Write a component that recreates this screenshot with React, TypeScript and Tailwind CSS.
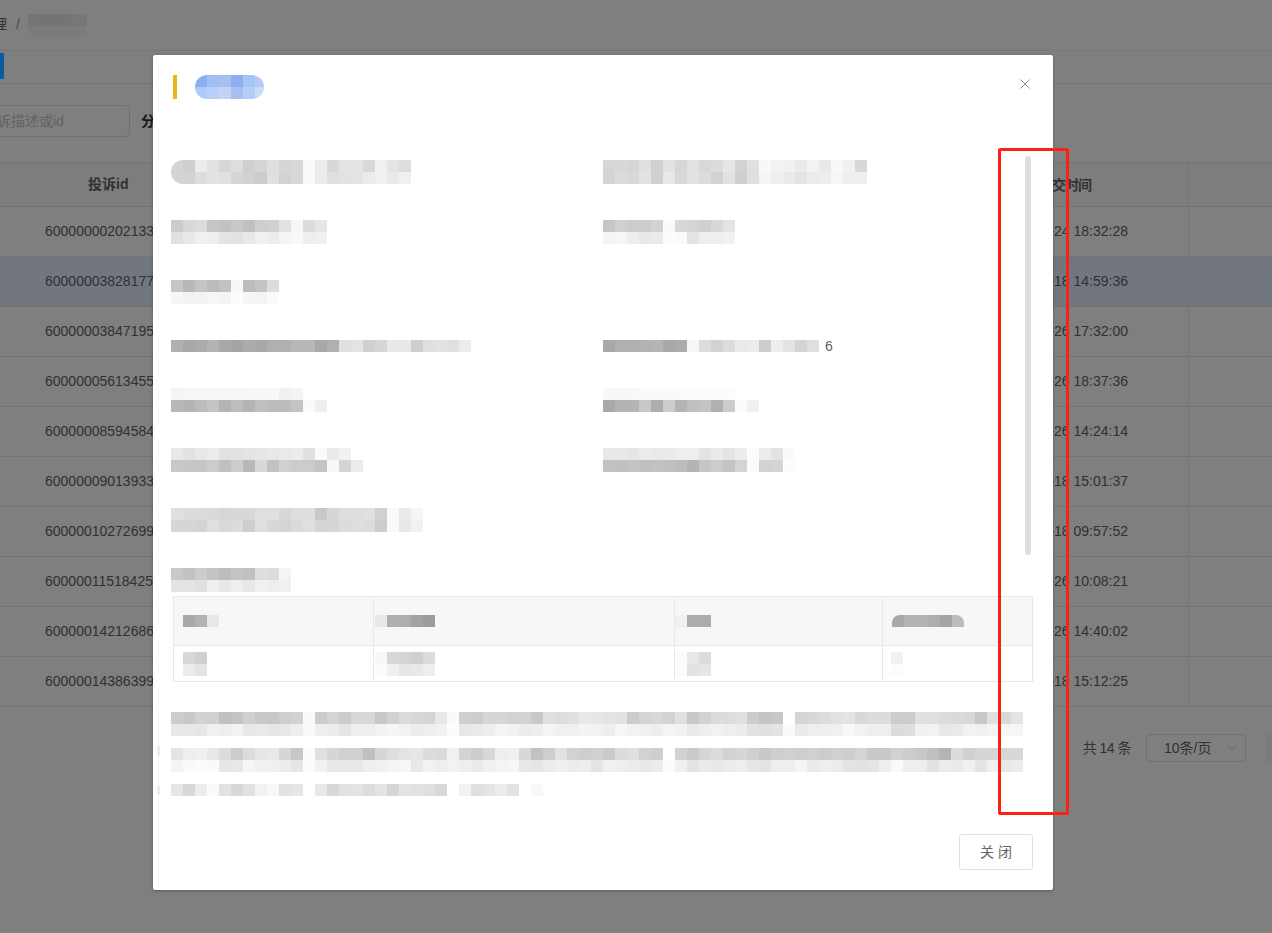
const rows = [
  ['60000000202133', '2023-04-24 18:32:28'],
  ['60000003828177', '2023-04-18 14:59:36'],
  ['60000003847195', '2023-04-26 17:32:00'],
  ['60000005613455', '2023-04-26 18:37:36'],
  ['60000008594584', '2023-04-26 14:24:14'],
  ['60000009013933', '2023-04-18 15:01:37'],
  ['60000010272699', '2023-04-18 09:57:52'],
  ['60000011518425', '2023-04-26 10:08:21'],
  ['60000014212686', '2023-04-26 14:40:02'],
  ['60000014386399', '2023-04-18 15:12:25'],
]

// two hex digits = a grey, six = a full colour
const shade = (t: string) => (t.length === 2 ? `#${t}${t}${t}` : `#${t}`)

function Mosaic({ lines, className = '' }: { lines: string[]; className?: string }) {
  return (
    <div className={`flex w-fit flex-col ${className}`}>
      {lines.map((line, i) => (
        <div key={i} className="flex">
          {line.split(' ').map((t, j) => (
            <div key={j} className="h-3 w-3" style={{ backgroundColor: shade(t) }} />
          ))}
        </div>
      ))}
    </div>
  )
}

const grid = [
  [
    ['d4 cf ec e2 d6 dd cf d5 de d6 d8 fa ec d8 e4 e4 d8 f0 e4 dd', 'd4 d2 dd e2 e0 d6 d2 cc e0 d2 d8 fa ec e0 e2 e4 ec f0 ea f0'],
    ['d6 d8 d6 e0 d0 e2 d6 e2 d8 dc e6 d2 e0 f8 f2 f0 ea f2 e8 f8 f0 d8', 'd4 dc d8 e2 d0 e8 d8 e2 dc d2 e2 cf e0 f4 ee ea e4 ec ee f6 ee ee'],
  ],
  [
    ['cc d8 dc c6 c2 c8 c0 ce d0 e2 f6 dc e6', 'e0 e8 f0 ee e4 e2 e8 f0 ec f4 f8 ee f0'],
    ['c6 d0 cc cc d2 fa d8 d4 d0 d8 e4', 'f4 f6 ee e8 ea fc fa e4 ee ee f2'],
  ],
  [['c6 b8 c4 bc c2 f8 bc c4 dc', 'f6 f2 f2 f6 f4 fc f6 f4 fa'], []],
  [
    ['b0 a8 ac b4 a8 a4 ac a8 b0 b0 b8 b8 a8 b0 e0 e4 d0 d6 e8 e8 ce e0 e2 e0 ec'],
    ['a8 b0 b0 b2 b4 a8 ac f6 dc d2 dc ea ec cc ee e4 d4 e0'],
  ],
]

const raised = [
  [
    ['f4 f6 f6 f6 f6 f6 f6 f8 f8 f0 f4 ff ff', 'b8 b4 bc c4 b4 be b4 c0 bc bc c4 fa ee'],
    ['f8 f8 f8 fa fa fa fa fc fc fc fc ff ff', 'a8 b4 b4 c8 ae cc b4 c0 c4 b0 cc fc f0'],
  ],
  [
    ['e8 e2 e8 ec e2 e2 e4 e6 e8 ea ec e0 fa ea f2 ff', 'c8 c6 c6 cc c0 cc b8 d8 c2 d0 cc cc c4 f8 d4 ec'],
    ['e8 e8 e6 ec ea ea ee ee e4 ea e4 ec fc ec e2 fa', 'c2 c0 c4 c0 c2 c0 bc b4 c6 cc c4 d4 fa d2 d4 fc'],
  ],
  [
    ['e0 dc dc da d6 d8 d8 e0 e0 d8 de de c8 d6 de de e0 d0 fa ea f6', 'd6 d6 d4 e0 d8 dc ce e0 d8 d4 da e0 d4 d6 dc de dc cc fa e8 f2'],
    [],
  ],
]

const para = [
  [
    'cc c8 d2 d0 c0 c4 d0 c8 c8 ce d2 fa cc d4 cc d8 d8 c8 d2 dc d8 d4 e8 fa d0 cc d6 d6 d2 d2 c8 e0 dc e0 e8 e6 e4 e2 cc d4 d8 d2 e0 c8 d2 dc dc e0 cc c4 c8 ff d4 d8 dc e2 e4 d8 dc dc cc cc e0 e0 dc da d8 c8 e0 d8 e4',
    'e8 e8 e6 f0 ee f2 e8 ea e6 e8 ee fa ee ec e6 ee ee f2 f6 f2 ec ee f2 fc e8 ea ee f4 f2 ec ee f4 f0 f0 f4 f2 ee f6 f2 f0 ee f4 f2 ea ee f2 ee ec e2 e0 e4 fa ea ee ee f0 f8 f2 ee ee dc de f0 f2 e8 ea f2 f0 f4 f6 f6',
  ],
  [
    'e4 ee f0 e8 dc cc dc e6 e8 d6 c8 fc e0 d6 d0 d0 c0 d6 de e4 e6 dc da f0 d4 cc d8 ee f0 d8 c2 ce e2 d2 ce d0 ca dc e0 d2 ce ff d2 ca d6 dc d2 d6 d0 c8 ce d0 ce d0 cc d0 ce d4 c8 c8 d2 cc c8 c0 b4 dc d0 d6 d6 d8 d8',
    'f4 fa fc fa e6 e8 f6 f0 f0 ec e6 fc f2 e8 e8 e8 ee f0 f4 f6 e8 f2 ee f2 ee ea f0 f4 f6 e8 e6 ec f0 ec ee e4 f0 ee ec e8 ec fc f0 e4 ea e8 ec ee e6 e4 ee ee f4 ea ee ec e4 e2 e4 ee fa ee ee e2 ec ea f0 e4 f0 e8 ec',
  ],
  ['e6 d8 ec fa e2 d8 e2 f2 f8 e2 e6 ff e8 d8 e2 e4 dc e4 d6 e4 e2 e0 d8 ff f2 e0 e4 ec e2 ff f8'],
]

function CloseIcon() {
  return (
    <svg width="10" height="10" viewBox="0 0 10 10" fill="none" stroke="#909399" strokeWidth="1">
      <path d="M0.5 0.5L9.5 9.5M9.5 0.5L0.5 9.5" />
    </svg>
  )
}

function Chevron() {
  return (
    <svg width="10" height="6" viewBox="0 0 10 6" fill="none" stroke="#c0c4cc" strokeWidth="1">
      <path d="M1 0.5L5 4.5L9 0.5" />
    </svg>
  )
}

function DetailTable() {
  return (
    <div className="ml-[2px] grid w-[860px] grid-cols-[200px_301px_208px_150px] border-l border-t border-[#e4e8ef]">
      <div className="flex h-[49px] items-center border-b border-r border-[#e4e8ef] bg-[#f7f7f8] pl-[9px]">
        <Mosaic lines={['a8 b2 e8']} />
      </div>
      <div className="flex h-[49px] items-center border-b border-r border-[#e4e8ef] bg-[#f7f7f8] pl-px">
        <Mosaic lines={['e8 b0 ae a2 9c']} />
      </div>
      <div className="flex h-[49px] items-center border-b border-r border-[#e4e8ef] bg-[#f7f7f8]">
        <Mosaic lines={['f0 ac ac']} />
      </div>
      <div className="flex h-[49px] items-center border-b border-r border-[#e4e8ef] bg-[#f7f7f8] pl-[9px]">
        <Mosaic lines={['a8 b4 b4 ae a4 bc']} className="overflow-hidden rounded-t-[8px]" />
      </div>
      <div className="flex h-9 items-center border-b border-r border-[#e4e8ef] pl-[9px]">
        <Mosaic lines={['d8 d0', 'ec e4']} />
      </div>
      <div className="flex h-9 items-center border-b border-r border-[#e4e8ef] pl-px">
        <Mosaic lines={['f8 d8 d4 d0 dc', 'fc f0 e6 e8 ee']} />
      </div>
      <div className="flex h-9 items-center border-b border-r border-[#e4e8ef]">
        <Mosaic lines={['fc e8 dc', 'fc e2 e6']} />
      </div>
      <div className="flex h-9 items-center border-b border-r border-[#e4e8ef] pl-2">
        <Mosaic lines={['f2', 'fc']} />
      </div>
    </div>
  )
}

export default function App() {
  return (
    <div className="relative h-screen w-full overflow-hidden bg-white font-['Liberation_Sans','Noto_Sans_CJK_SC',sans-serif] text-sm text-[#606266]">
      {/* page behind the dialog */}
      <div className="flex h-[51px] items-center gap-[9px] border-b border-[#eeeeee] pb-[3px]">
        <span className="-ml-[49px]">投诉管理</span>
        <span className="text-[#909399]">/</span>
        <div className="mt-[5px] w-[59px] -ml-px overflow-hidden rounded-b-[10px]">
          <Mosaic lines={['ec e8 e8 ec ee', 'f6 f6 f6 f8 f8']} />
        </div>
      </div>
      <div className="relative z-20 h-[32px] pt-[2px]">
        <div className="h-[26px] w-1 bg-[#0b5aa5]" />
      </div>
      <div className="flex h-[80px] items-start gap-[11px] border-y border-[#e8e8ea] pt-[21px]">
        <input
          readOnly
          placeholder="投诉描述或id"
          className="-ml-10 h-8 w-[170px] rounded border border-[#dcdfe6] pl-[22px] text-sm outline-none placeholder:text-[#c0c4cc]"
        />
        <span className="mt-[6px] font-bold text-[#303133]">分类</span>
      </div>
      <div className="flex h-[44px] items-center border-b border-[#e6e6ea] bg-[#fbfbfb] font-bold text-[#606266]">
        <div className="w-[1188px] pb-[2px] pl-[88px]">投诉id</div>
        <div className="h-full flex-1 border-l border-[#e6e6ea]" />
      </div>
      {rows.map(([id, time], i) => (
        <div key={id} className={`flex h-[50px] items-center border-b border-[#e6e6ea] ${i === 1 ? 'bg-[#e4eeff]' : ''}`}>
          <div className="flex w-[1188px] justify-between pb-[2px] pl-[45px] pr-[60px]">
            <span>{id}</span>
            <span>{time}</span>
          </div>
          <div className="h-full flex-1 border-l border-[#e6e6ea]" />
        </div>
      ))}
      <div className="absolute left-[1052px] top-[175px] z-0 font-bold tracking-[-1px]">交时间</div>
      <div className="mt-[27px] flex h-[28px] items-center justify-end">
        <span className="tracking-[-0.5px]">共 14 条</span>
        <div className="ml-[15px] flex h-[28px] w-[100px] items-center justify-between rounded-[3px] border border-[#dcdfe6] pl-[17px] pr-2">
          <span>10条/页</span>
          <Chevron />
        </div>
        <div className="-mr-[24px] ml-5 h-[28px] w-[30px] rounded-[2px] bg-[#f4f4f5]" />
      </div>

      {/* overlay */}
      <div className="absolute inset-0 z-10 bg-black/50" />

      {/* dialog */}
      <div className="absolute left-[153px] top-[55px] z-30 flex h-[835px] w-[900px] flex-col rounded-[2px] bg-white shadow-[0_1px_3px_rgba(0,0,0,0.3)]">
        <div className="flex h-[85px] shrink-0 items-start justify-between pl-5 pr-[23px] pt-5">
          <div className="flex items-center">
            <div className="h-6 w-1 bg-[#e6b816]" />
            <div className="ml-[18px] w-[69px] overflow-hidden rounded-[12px]">
              <Mosaic lines={['8ab0f0 a2bef2 a8c0f0 8ab0f0 a8c4f4 b4ccf4', 'aecbf8 b8d0f8 c4d2f4 a8c0f0 b4cef8 c8dcf8']} />
            </div>
          </div>
          <div className="mt-1">
            <CloseIcon />
          </div>
        </div>

        <div className="relative min-h-0 flex-1 overflow-hidden pl-[18px] pt-5">
          {grid.map((row, i) => (
            <div key={i} className="grid h-[60px] grid-cols-[432px_1fr]">
              {row.map((lines, j) =>
                lines.length ? (
                  <div key={j} className="flex items-start">
                    <Mosaic lines={lines} className={i === 0 && j === 0 ? 'overflow-hidden rounded-l-[12px]' : ''} />
                    {i === 3 && j === 1 && <span className="-mt-1 ml-[6px] text-[#606266]">6</span>}
                  </div>
                ) : (
                  <div key={j} />
                ),
              )}
            </div>
          ))}
          {raised.map((row, i) => (
            <div key={i} className="grid h-[60px] grid-cols-[432px_1fr]">
              {row.map((lines, j) =>
                lines.length ? <Mosaic key={j} lines={lines} className="-mt-3" /> : <div key={j} />,
              )}
            </div>
          ))}
          <div className="flex h-[16px] items-start">
            <Mosaic lines={['c8 c2 cc c4 bc c4 c0 de dc f4', 'e4 e4 e0 ee e8 ee e8 f0 ee f0']} className="-mt-3" />
          </div>
          <DetailTable />
          <div className="mt-[30px]">
            {para.map((lines, i) => (
              <div key={i} className="h-9">
                <Mosaic lines={lines} />
              </div>
            ))}
          </div>

          <div className="absolute left-[872px] top-[16px] h-[399px] w-[6px] rounded-[3px] bg-[#dfdfe1]" />
          <div className="absolute left-[4px] top-[605px] h-[12px] w-[3px] rounded-l-full bg-[#ececec]" />
          <div className="absolute left-[4px] top-[645px] h-[10px] w-[3px] rounded-l-full bg-[#ececec]" />
        </div>

        <div className="flex shrink-0 justify-end pb-5 pr-5 pt-[19px]">
          <button className="h-9 w-[74px] rounded-[3px] border border-[#dcdfe6] bg-white text-sm text-[#606266]">关 闭</button>
        </div>
      </div>

      {/* red annotation drawn on the screenshot */}
      <div className="absolute left-[998px] top-[148px] z-40 h-[667px] w-[71px] rounded-[2px] border-[3px] border-[#ff2015]" />
    </div>
  )
}
